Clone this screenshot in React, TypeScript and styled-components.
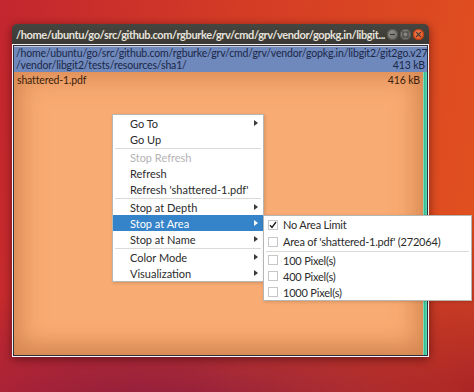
import styled, { createGlobalStyle } from "styled-components";

const GlobalStyle = createGlobalStyle`
  html, body {
    margin: 0;
    padding: 0;
  }
  body {
    font-family: Lato, "Noto Sans", sans-serif;
  }
`;

const Desktop = styled.div`
  position: relative;
  width: 474px;
  height: 392px;
  overflow: hidden;
  padding: 24px 0 0 12px;
  box-sizing: border-box;
  background:
    radial-gradient(ellipse 420px 260px at 35% 118%, rgba(112, 16, 74, 0.95), rgba(112, 16, 74, 0) 75%),
    radial-gradient(ellipse 300px 220px at 100% 100%, rgba(165, 32, 40, 0.9), rgba(165, 32, 40, 0) 80%),
    linear-gradient(100deg, #c3262f 0%, #d43c25 45%, #e2521f 100%);
`;

const Window = styled.div`
  width: 417px;
  display: flex;
  flex-direction: column;
  box-shadow: 0 2px 10px rgba(40, 0, 10, 0.55);
  border-radius: 5px 5px 0 0;
`;

const TitleBar = styled.div`
  height: 20px;
  display: flex;
  align-items: center;
  padding: 0 5px 0 4px;
  background: linear-gradient(#46453f, #3a3935);
  border-radius: 5px 5px 0 0;
`;

const Title = styled.div`
  flex: 1;
  color: #e6e3dc;
  font-size: 11px;
  font-weight: 700;
  letter-spacing: -0.38px;
  white-space: nowrap;
  overflow: hidden;
`;

const Controls = styled.div`
  display: flex;
  gap: 2px;
  align-items: center;
`;

const WinButton = styled.div<{ $close?: boolean }>`
  width: 11px;
  height: 11px;
  border-radius: 50%;
  display: flex;
  align-items: center;
  justify-content: center;
  background: ${(p) => (p.$close ? "radial-gradient(circle at 40% 35%, #f27a4e, #dd4a19)" : "radial-gradient(circle at 40% 35%, #8d8c87, #6b6a65)")};
  box-shadow: inset 0 0 0 1px ${(p) => (p.$close ? "#b53d12" : "#55544f")};
`;

const Frame = styled.div`
  border: 1px solid #f4f2f6;
  background: #2d2f3a;
  padding: 1px;
`;

const Header = styled.div`
  background: #6f89bd;
  color: #1b2746;
  font-size: 10.5px;
  letter-spacing: -0.15px;
  line-height: 11.5px;
  padding: 1px 2px 1px 2px;
  border-top: 1px solid #c8cbd8;
`;

const HeaderRow = styled.div`
  display: flex;
  justify-content: space-between;
  white-space: nowrap;
`;

const Map = styled.div`
  display: flex;
  height: 283px;
`;

const Tile = styled.div`
  flex: 1;
  background: #f8ab72;
  box-shadow:
    inset 0 0 24px 7px rgba(200, 122, 70, 0.6),
    inset 0 -10px 18px rgba(190, 110, 60, 0.3);
  color: #3a1d0a;
  font-size: 10.5px;
  letter-spacing: -0.15px;
  padding: 1px 3px;
`;

const TileLabel = styled.div`
  display: flex;
  justify-content: space-between;
  line-height: 14px;
`;

const Stripe = styled.div`
  width: 3px;
  background: linear-gradient(90deg, #2fb58a, #5fe0b8);
  border-left: 1px solid #7fd9b6;
`;

const Menu = styled.div<{ $left: number; $top: number; $width: number }>`
  position: absolute;
  left: ${(p) => p.$left}px;
  top: ${(p) => p.$top}px;
  width: ${(p) => p.$width}px;
  box-sizing: border-box;
  background: #ffffff;
  border: 1px solid #b8b6b2;
  box-shadow: 1px 1px 3px rgba(0, 0, 0, 0.15);
  font-size: 11px;
`;

const Item = styled.div<{ $active?: boolean; $disabled?: boolean; $h?: number }>`
  height: ${(p) => p.$h ?? 16}px;
  display: flex;
  align-items: center;
  padding: 0 5px 0 17px;
  background: ${(p) => (p.$active ? "#3583c9" : "transparent")};
  color: ${(p) => (p.$active ? "#ffffff" : p.$disabled ? "#b4b4b4" : "#2b2b2b")};
  white-space: nowrap;
`;

const Label = styled.span`
  flex: 1;
`;

const Arrow = styled.span<{ $active?: boolean }>`
  width: 0;
  height: 0;
  border-top: 3px solid transparent;
  border-bottom: 3px solid transparent;
  border-left: 4px solid ${(p) => (p.$active ? "#ffffff" : "#3a3a3a")};
`;

const Separator = styled.div`
  height: 2px;
  display: flex;
  align-items: center;
  padding: 0 2px;
  &::after {
    content: "";
    flex: 1;
    height: 1px;
    background: #dcdad6;
  }
`;

const CheckItem = styled(Item)`
  padding-left: 4px;
  gap: 5px;
  letter-spacing: -0.2px;
`;

const Box = styled.span`
  width: 10px;
  height: 10px;
  box-sizing: border-box;
  border: 1px solid #c9c7c3;
  background: #ffffff;
  display: flex;
  align-items: center;
  justify-content: center;
`;

const menu: ({ label: string; sub?: boolean; active?: boolean; disabled?: boolean } | "sep")[] = [
  { label: "Go To", sub: true },
  { label: "Go Up" },
  "sep",
  { label: "Stop Refresh", disabled: true },
  { label: "Refresh" },
  { label: "Refresh 'shattered-1.pdf'" },
  "sep",
  { label: "Stop at Depth", sub: true },
  { label: "Stop at Area", sub: true, active: true },
  { label: "Stop at Name", sub: true },
  "sep",
  { label: "Color Mode", sub: true },
  { label: "Visualization", sub: true },
];

const areaMenu: ({ label: string; checked?: boolean; h?: number } | "sep")[] = [
  { label: "No Area Limit", checked: true, h: 17 },
  { label: "Area of 'shattered-1.pdf' (272064)", h: 17 },
  "sep",
  { label: "100 Pixel(s)" },
  { label: "400 Pixel(s)" },
  { label: "1000 Pixel(s)" },
];

export default function App() {
  return (
    <Desktop>
      <GlobalStyle />
      <Window>
        <TitleBar>
          <Title>/home/ubuntu/go/src/github.com/rgburke/grv/cmd/grv/vendor/gopkg.in/libgit...</Title>
          <Controls>
            <WinButton>
              <svg width="7" height="7" viewBox="0 0 7 7">
                <path d="M1 3.5h5" stroke="#3c3b37" strokeWidth="1.2" />
              </svg>
            </WinButton>
            <WinButton>
              <svg width="7" height="7" viewBox="0 0 7 7">
                <rect x="1" y="1" width="5" height="5" fill="none" stroke="#3c3b37" strokeWidth="1" />
              </svg>
            </WinButton>
            <WinButton $close>
              <svg width="7" height="7" viewBox="0 0 7 7">
                <path d="M1.2 1.2l4.6 4.6M5.8 1.2l-4.6 4.6" stroke="#3c3b37" strokeWidth="1.2" />
              </svg>
            </WinButton>
          </Controls>
        </TitleBar>
        <Frame>
          <Header>
            <HeaderRow>
              <span>/home/ubuntu/go/src/github.com/rgburke/grv/cmd/grv/vendor/gopkg.in/libgit2/git2go.v27</span>
            </HeaderRow>
            <HeaderRow>
              <span>/vendor/libgit2/tests/resources/sha1/</span>
              <span>413 kB</span>
            </HeaderRow>
          </Header>
          <Map>
            <Tile>
              <TileLabel>
                <span>shattered-1.pdf</span>
                <span>416 kB</span>
              </TileLabel>
            </Tile>
            <Stripe />
          </Map>
        </Frame>
      </Window>

      <Menu $left={112} $top={114} $width={152}>
        {menu.map((m, i) =>
          m === "sep" ? (
            <Separator key={i} />
          ) : (
            <Item key={i} $active={m.active} $disabled={m.disabled}>
              <Label>{m.label}</Label>
              {m.sub && <Arrow $active={m.active} />}
            </Item>
          )
        )}
      </Menu>

      <Menu $left={263} $top={215} $width={209}>
        {areaMenu.map((m, i) =>
          m === "sep" ? (
            <Separator key={i} />
          ) : (
            <CheckItem key={i} $h={m.h}>
              <Box>
                {m.checked && (
                  <svg width="8" height="8" viewBox="0 0 8 8">
                    <path d="M1 4.2l2 2.3L7 1" fill="none" stroke="#1e1e1e" strokeWidth="1.4" />
                  </svg>
                )}
              </Box>
              <Label>{m.label}</Label>
            </CheckItem>
          )
        )}
      </Menu>
    </Desktop>
  );
}
